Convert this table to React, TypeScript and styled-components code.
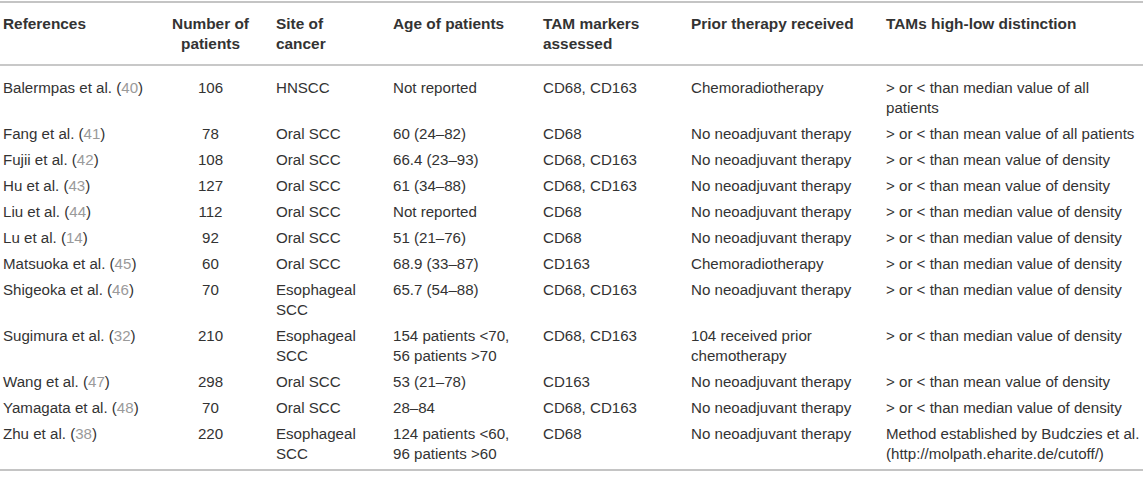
import React from "react";
import styled, { createGlobalStyle } from "styled-components";

const Global = createGlobalStyle`
  html, body { margin: 0; padding: 0; background: #ffffff; }
  body { font-family: "Liberation Sans", Arial, sans-serif; }
`;

const Page = styled.div`
  padding-top: 1px;
  width: 1143px;
`;

const Table = styled.table`
  width: 1143px;
  border-collapse: collapse;
  table-layout: fixed;
  font-family: "Liberation Sans", Arial, sans-serif;
  font-size: 15.1px;
  line-height: 20px;
  color: #333333;
`;

/* right padding per column: references, number, site, age, markers, therapy, distinction */
const rightPad = [3, 3, 20, 16, 16, 16, 0];

const HeadCell = styled.th<{ $col: number }>`
  text-align: ${(p) => (p.$col === 1 ? "center" : "left")};
  vertical-align: top;
  font-weight: bold;
  font-size: 15.4px;
  padding: 11px ${(p) => rightPad[p.$col]}px 10px 3px;
  border-top: 2px solid #c4c4c4;
  border-bottom: 2px solid #c8c8c8;
`;

const Cell = styled.td<{ $col: number; $first?: boolean; $end?: boolean }>`
  text-align: ${(p) => (p.$col === 1 ? "center" : "left")};
  vertical-align: top;
  padding: ${(p) => (p.$first ? "12px" : "3px")} ${(p) => rightPad[p.$col]}px
    ${(p) => (p.$end ? "5px" : "3px")} 3px;
  border-bottom: ${(p) => (p.$end ? "2px solid #c4c4c4" : "none")};
`;

const Ref = styled.span`
  color: #9a9a9a;
`;

type Row = {
  author: string;
  ref: string;
  n: string;
  site: string;
  age: string;
  markers: string;
  therapy: string;
  distinction: string;
};

const rows: Row[] = [
  { author: "Balermpas et al.", ref: "40", n: "106", site: "HNSCC", age: "Not reported", markers: "CD68, CD163", therapy: "Chemoradiotherapy", distinction: "> or < than median value of all patients" },
  { author: "Fang et al.", ref: "41", n: "78", site: "Oral SCC", age: "60 (24–82)", markers: "CD68", therapy: "No neoadjuvant therapy", distinction: "> or < than mean value of all patients" },
  { author: "Fujii et al.", ref: "42", n: "108", site: "Oral SCC", age: "66.4 (23–93)", markers: "CD68, CD163", therapy: "No neoadjuvant therapy", distinction: "> or < than mean value of density" },
  { author: "Hu et al.", ref: "43", n: "127", site: "Oral SCC", age: "61 (34–88)", markers: "CD68, CD163", therapy: "No neoadjuvant therapy", distinction: "> or < than mean value of density" },
  { author: "Liu et al.", ref: "44", n: "112", site: "Oral SCC", age: "Not reported", markers: "CD68", therapy: "No neoadjuvant therapy", distinction: "> or < than median value of density" },
  { author: "Lu et al.", ref: "14", n: "92", site: "Oral SCC", age: "51 (21–76)", markers: "CD68", therapy: "No neoadjuvant therapy", distinction: "> or < than median value of density" },
  { author: "Matsuoka et al.", ref: "45", n: "60", site: "Oral SCC", age: "68.9 (33–87)", markers: "CD163", therapy: "Chemoradiotherapy", distinction: "> or < than median value of density" },
  { author: "Shigeoka et al.", ref: "46", n: "70", site: "Esophageal SCC", age: "65.7 (54–88)", markers: "CD68, CD163", therapy: "No neoadjuvant therapy", distinction: "> or < than median value of density" },
  { author: "Sugimura et al.", ref: "32", n: "210", site: "Esophageal SCC", age: "154 patients <70, 56 patients >70", markers: "CD68, CD163", therapy: "104 received prior chemotherapy", distinction: "> or < than median value of density" },
  { author: "Wang et al.", ref: "47", n: "298", site: "Oral SCC", age: "53 (21–78)", markers: "CD163", therapy: "No neoadjuvant therapy", distinction: "> or < than mean value of density" },
  { author: "Yamagata et al.", ref: "48", n: "70", site: "Oral SCC", age: "28–84", markers: "CD68, CD163", therapy: "No neoadjuvant therapy", distinction: "> or < than median value of density" },
  { author: "Zhu et al.", ref: "38", n: "220", site: "Esophageal SCC", age: "124 patients <60, 96 patients >60", markers: "CD68", therapy: "No neoadjuvant therapy", distinction: "Method established by Budczies et al. (http://molpath.eharite.de/cutoff/)" },
];

const headers = [
  "References",
  "Number of patients",
  "Site of cancer",
  "Age of patients",
  "TAM markers assessed",
  "Prior therapy received",
  "TAMs high-low distinction",
];

const widths = [148, 125, 117, 150, 148, 195, 260];

export default function App() {
  return (
    <Page>
      <Global />
      <Table>
        <colgroup>
          {widths.map((w, i) => (
            <col key={i} style={{ width: w }} />
          ))}
        </colgroup>
        <thead>
          <tr>
            {headers.map((h, i) => (
              <HeadCell key={h} $col={i}>
                {h}
              </HeadCell>
            ))}
          </tr>
        </thead>
        <tbody>
          {rows.map((r, i) => {
            const first = i === 0;
            const end = i === rows.length - 1;
            const values = [r.n, r.site, r.age, r.markers, r.therapy, r.distinction];
            return (
              <tr key={r.author}>
                <Cell $col={0} $first={first} $end={end}>
                  {r.author} (<Ref>{r.ref}</Ref>)
                </Cell>
                {values.map((v, j) => (
                  <Cell key={j} $col={j + 1} $first={first} $end={end}>
                    {v}
                  </Cell>
                ))}
              </tr>
            );
          })}
        </tbody>
      </Table>
    </Page>
  );
}
